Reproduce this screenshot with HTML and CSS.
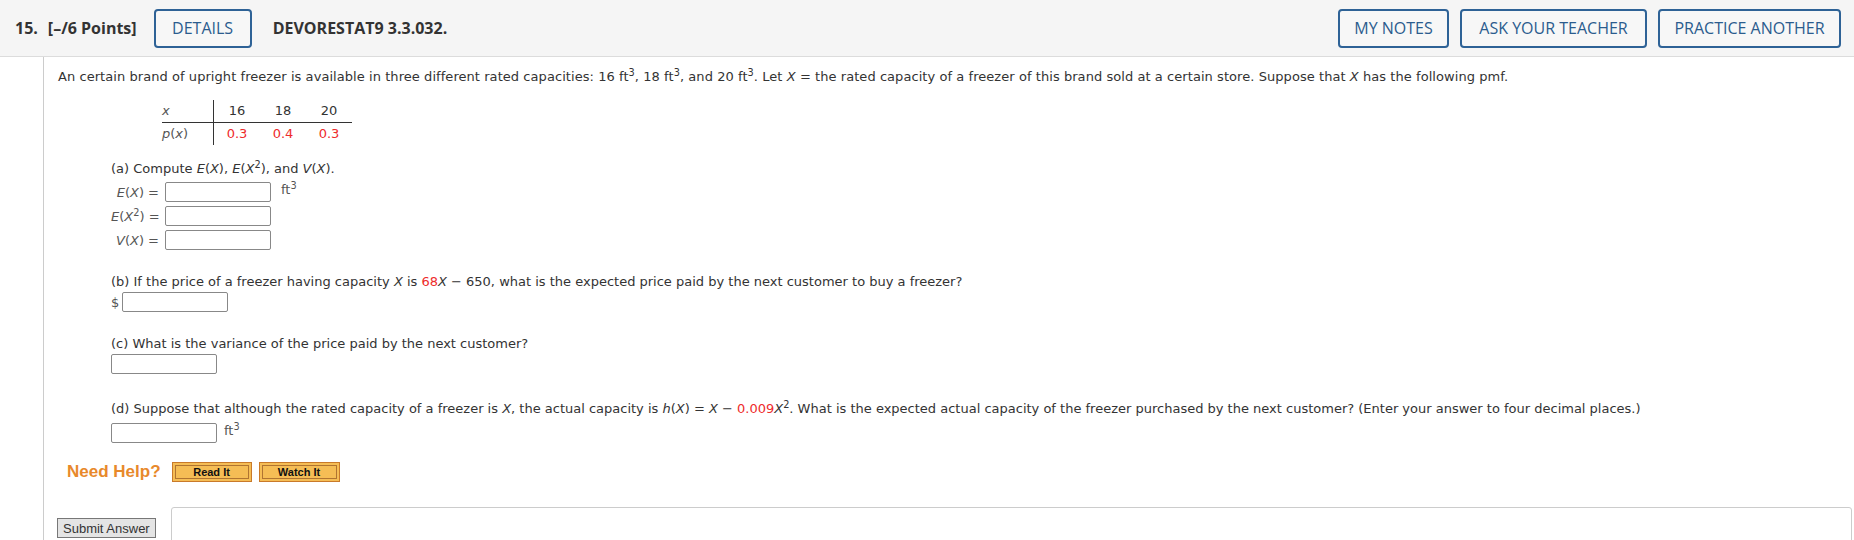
FILE: index.html
```html
<!DOCTYPE html>
<html lang="en">
  <head>
    <meta charset="UTF-8" />
    <title>Question 15</title>
    <link rel="stylesheet" href="styles.css">
  </head>
  <body>
    <div class="qhead">
      <span class="qnum">15.</span>
      <span class="qpoints">[&ndash;/6 Points]</span>
      <button class="hbtn btn-details">DETAILS</button>
      <span class="qtitle">DEVORESTAT9 3.3.032.</span>
      <div class="hright">
        <button class="hbtn btn-notes">MY NOTES</button>
        <button class="hbtn btn-ask">ASK YOUR TEACHER</button>
        <button class="hbtn btn-practice">PRACTICE ANOTHER</button>
      </div>
    </div>

    <div class="qbody">
      <p class="intro">An certain brand of upright freezer is available in three different rated capacities: 16 ft<sup>3</sup>, 18 ft<sup>3</sup>, and 20 ft<sup>3</sup>. Let <i>X</i> = the rated capacity of a freezer of this brand sold at a certain store. Suppose that <i>X</i> has the following pmf.</p>

      <table class="pmf">
        <tr class="top">
          <td class="lab"><i>x</i></td>
          <td>16</td>
          <td>18</td>
          <td>20</td>
        </tr>
        <tr>
          <td class="lab"><i>p</i>(<i>x</i>)</td>
          <td class="red">0.3</td>
          <td class="red">0.4</td>
          <td class="red">0.3</td>
        </tr>
      </table>

      <div class="part">
        <p class="ask">(a) Compute <i>E</i>(<i>X</i>), <i>E</i>(<i>X</i><sup>2</sup>), and <i>V</i>(<i>X</i>).</p>
        <div class="answers">
          <span class="alab"><i>E</i>(<i>X</i>) =</span>
          <input type="text" class="box" />
          <span class="unit">ft<sup>3</sup></span>

          <span class="alab"><i>E</i>(<i>X</i><sup>2</sup>) =</span>
          <input type="text" class="box" />
          <span></span>

          <span class="alab"><i>V</i>(<i>X</i>) =</span>
          <input type="text" class="box" />
          <span></span>
        </div>
      </div>

      <div class="part part-b">
        <p class="ask">(b) If the price of a freezer having capacity <i>X</i> is <span class="red">68</span><i>X</i> &minus; 650, what is the expected price paid by the next customer to buy a freezer?</p>
        <div class="inrow">$ <input type="text" class="box" /></div>
      </div>

      <div class="part part-c">
        <p class="ask">(c) What is the variance of the price paid by the next customer?</p>
        <div class="inrow"><input type="text" class="box" /></div>
      </div>

      <div class="part part-d">
        <p class="ask">(d) Suppose that although the rated capacity of a freezer is <i>X</i>, the actual capacity is <i>h</i>(<i>X</i>) = <i>X</i> &minus; <span class="red">0.009</span><i>X</i><sup>2</sup>. What is the expected actual capacity of the freezer purchased by the next customer? (Enter your answer to four decimal places.)</p>
        <div class="inrow"><input type="text" class="box" /><span class="unit">ft<sup>3</sup></span></div>
      </div>

      <div class="help">
        <span class="help-label">Need Help?</span>
        <button class="help-btn btn-read">Read It</button>
        <button class="help-btn btn-watch">Watch It</button>
      </div>

      <div class="submit-row">
        <button class="submit">Submit Answer</button>
        <div class="feedback"></div>
      </div>
    </div>
  </body>
</html>
```

FILE: styles.css
```css
body {
  margin: 0;
  padding: 0;
  font-family: "DejaVu Sans", Verdana, sans-serif;
  font-size: 13px;
  color: #333;
  background-color: #ffffff;
}

sup {
  font-size: 0.75em;
  line-height: 0;
}

.red {
  color: #ee2b2b;
}

/* header bar */
.qhead {
  display: flex;
  align-items: center;
  height: 57px;
  box-sizing: border-box;
  padding: 0 13px 0 15px;
  background-color: #f5f5f5;
  border-bottom: 1px solid #dcdcdc;
  font-family: "Open Sans", sans-serif;
  font-size: 16px;
  color: #333;
}
.qnum {
  font-weight: bold;
  margin-right: 10px;
}
.qpoints {
  font-weight: bold;
  margin-right: 17px;
}
.qtitle {
  font-weight: bold;
  margin-left: 21px;
}
.hbtn {
  height: 39px;
  padding: 0;
  font-family: "Open Sans", sans-serif;
  font-size: 16px;
  color: #2b5c8e;
  background-color: #f7f7f7;
  border: 2px solid #2e6296;
  border-radius: 4px;
}
.btn-details {
  width: 98px;
}
.btn-notes {
  width: 111px;
}
.btn-ask {
  width: 187px;
}
.btn-practice {
  width: 183px;
}
.hright {
  margin-left: auto;
  display: flex;
  gap: 11px;
}

/* question body */
.qbody {
  margin-left: 43px;
  padding-left: 14px;
  border-left: 1px solid #cccccc;
  padding-bottom: 20px;
}
.intro {
  margin: 0;
  padding-top: 10px;
  line-height: 20px;
  letter-spacing: 0.06px;
}

.pmf {
  border-collapse: collapse;
  margin: 13px 0 0 104px;
}
.pmf td {
  height: 22px;
  padding: 0;
  width: 46px;
  text-align: center;
  line-height: 22px;
}
.pmf td.lab {
  width: 51px;
  text-align: left;
  color: #555;
  border-right: 1px solid #333;
}
.pmf tr.top td {
  border-bottom: 1px solid #333;
}

.part {
  margin-left: 53px;
}
.ask {
  margin: 0;
  line-height: 20px;
}
.part:first-of-type {
  margin-top: 14px;
}
.answers {
  display: grid;
  grid-template-columns: 48px auto 1fr;
  column-gap: 6px;
  row-gap: 4px;
  margin-top: 3px;
  align-items: center;
}
.alab {
  text-align: right;
  color: #555;
  white-space: nowrap;
}
.box {
  width: 106px;
  height: 20px;
  box-sizing: border-box;
  margin: 0;
  border: 1px solid #888;
  border-radius: 2px;
  background-color: #fff;
}
.unit {
  color: #555;
  margin-left: 4px;
  align-self: start;
}
.part-b {
  margin-top: 22px;
}
.part-c {
  margin-top: 22px;
}
.part-d {
  margin-top: 25px;
}
.inrow {
  display: flex;
  align-items: center;
  gap: 3px;
  height: 20px;
}
.part-b .inrow {
  color: #555;
}
.part-d .inrow {
  margin-top: 4px;
}

/* help row */
.help {
  display: flex;
  align-items: center;
  height: 21px;
  margin: 18px 0 0 9px;
}
.help-label {
  font-family: "Liberation Sans", Arial, sans-serif;
  font-weight: bold;
  font-size: 17px;
  color: #e8892b;
  margin-right: 11px;
}
.help-btn {
  height: 20px;
  padding: 0;
  margin-right: 7px;
  font-family: "Liberation Sans", Arial, sans-serif;
  font-weight: bold;
  font-size: 11px;
  color: #111;
  background-color: #f5bd55;
  border: 1px solid #c97a2a;
  box-shadow: inset 0 0 0 2px #f5bd55, inset 0 0 0 3px #b07431;
}
.btn-read {
  width: 80px;
}
.btn-watch {
  width: 81px;
}

/* submit row */
.submit-row {
  display: flex;
  align-items: flex-start;
  margin-top: 25px;
  margin-left: -1px;
}
.submit {
  margin-top: 11px;
  height: 20px;
  padding: 0 5px;
  font-family: "Liberation Sans", Arial, sans-serif;
  font-size: 13px;
  color: #333;
  background-color: #e4e4e4;
  border: 1px solid #777;
  border-radius: 0;
}
.feedback {
  flex: 1;
  height: 60px;
  margin-left: 15px;
  margin-right: 2px;
  border: 1px solid #cccccc;
  border-radius: 3px;
}
```
